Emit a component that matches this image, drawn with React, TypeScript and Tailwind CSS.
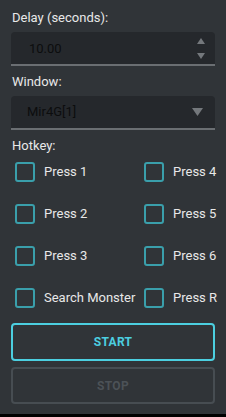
import { useState } from 'react';

const hotkeys = [
  ['Press 1', 'Press 4'],
  ['Press 2', 'Press 5'],
  ['Press 3', 'Press 6'],
  ['Search Monster', 'Press R'],
];

function Check({ label }: { label: string }) {
  const [on, setOn] = useState(false);
  return (
    <label className="flex items-center gap-[9px] cursor-pointer" onClick={() => setOn(!on)}>
      <span className="w-5 h-5 rounded-[3px] border-2 border-[#3a9fab] flex items-center justify-center shrink-0">
        {on && <span className="w-2.5 h-2.5 bg-[#3a9fab] rounded-[1px]" />}
      </span>
      <span className="text-[13px] text-[#e8e8e8] whitespace-nowrap">{label}</span>
    </label>
  );
}

export default function App() {
  return (
    <div className="min-h-screen bg-black" style={{ fontFamily: 'Roboto, "Liberation Sans", sans-serif' }}>
      <div className="h-[414px] bg-[#303438] px-[11px] pt-[10px] flex flex-col">
        <div className="text-[13px] text-[#e8e8e8] pl-[1px] leading-[16px]">Delay (seconds):</div>
        <div className="mt-[6px] h-[34px] bg-[#25282c] rounded-t-[4px] border-b-2 border-[#6a6e72] flex items-center pl-[18px] pr-[10px]">
          <span className="text-[13px] text-[#0c0d0e] flex-1 pt-[2px]">10.00</span>
          <div className="flex flex-col items-center gap-[9px] text-[#74787c]">
            <svg width="8" height="6" viewBox="0 0 8 6"><path d="M4 0L8 6H0Z" fill="currentColor" /></svg>
            <svg width="8" height="6" viewBox="0 0 8 6"><path d="M0 0H8L4 6Z" fill="currentColor" /></svg>
          </div>
        </div>

        <div className="mt-[8px] text-[13px] text-[#e8e8e8] pl-[1px] leading-[16px]">Window:</div>
        <div className="mt-[6px] h-[34px] bg-[#25282c] rounded-t-[4px] border-b-2 border-[#6a6e72] flex items-center pl-[16px] pr-[10px]">
          <span className="text-[13px] text-[#0c0d0e] flex-1">Mir4G[1]</span>
          <svg width="11" height="8" viewBox="0 0 11 8" className="text-[#74787c] mr-[2px]"><path d="M0 0H11L5.5 8Z" fill="currentColor" /></svg>
        </div>

        <div className="mt-[8px] text-[13px] text-[#e8e8e8] pl-[1px] leading-[16px]">Hotkey:</div>
        <div className="mt-[8px] pl-[4px] grid grid-cols-[129px_1fr] gap-y-[22px]">
          {hotkeys.map(([a, b]) => (
            <div key={a} className="contents">
              <Check label={a} />
              <Check label={b} />
            </div>
          ))}
        </div>

        <button className="mt-[15px] h-[38px] rounded-[4px] border-2 border-[#4ccfe0] text-[#4ccfe0] text-[12px] font-bold tracking-wide">
          START
        </button>
        <button className="mt-[6px] h-[37px] rounded-[4px] border-2 border-[#474d52] text-[#4c5257] text-[12px] font-bold tracking-wide" disabled>
          STOP
        </button>
      </div>
    </div>
  );
}
